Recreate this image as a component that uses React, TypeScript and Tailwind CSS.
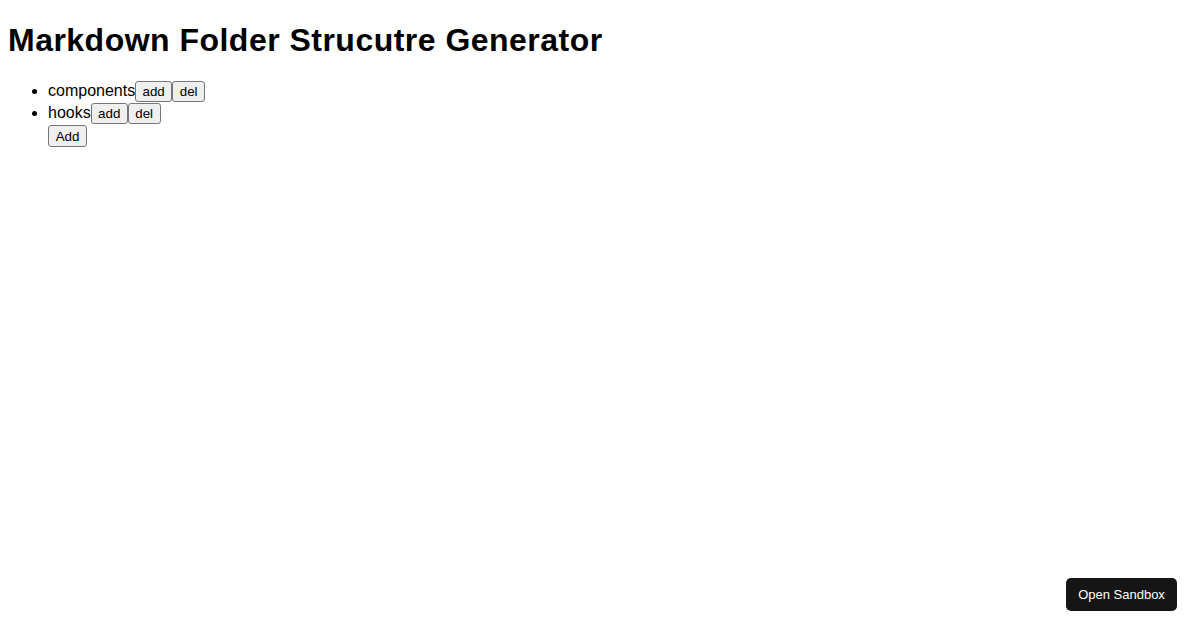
import React from "react";

const btn =
  "inline-block align-baseline bg-[#efefef] border border-[#767676] rounded-[3px] px-[6px] py-0 h-[21px] text-[13.33px] leading-[19px] text-black font-['Liberation_Sans',Arial,sans-serif]";

export default function App() {
  return (
    <div className="min-h-[630px] bg-white px-2 font-['Liberation_Sans',Arial,sans-serif] text-black text-[16px] leading-[normal]">
      <div className="pt-[22px]">
        <h1 className="text-[32px] font-bold leading-[normal] tracking-[0.48px] mb-[21.44px]">
          Markdown Folder Strucutre Generator
        </h1>
        <ul className="list-disc pl-10 my-4">
          <li className="h-[22px] leading-[22px]">
            components
            <button className={btn + " w-[37px]"}>add</button>
            <button className={btn + " w-[33px]"}>del</button>
          </li>
          <li className="h-[22px] leading-[22px]">
            hooks
            <button className={btn + " w-[37px]"}>add</button>
            <button className={btn + " w-[33px]"}>del</button>
          </li>
          <button className={btn + " w-[39px] h-[22px] mt-[1px]"}>Add</button>
        </ul>
      </div>
      <button className="fixed right-[23px] bottom-[19px] h-[33px] w-[111px] rounded-[5px] bg-[#151515] text-white text-[13px] font-['Liberation_Sans',Arial,sans-serif]">
        Open Sandbox
      </button>
    </div>
  );
}
